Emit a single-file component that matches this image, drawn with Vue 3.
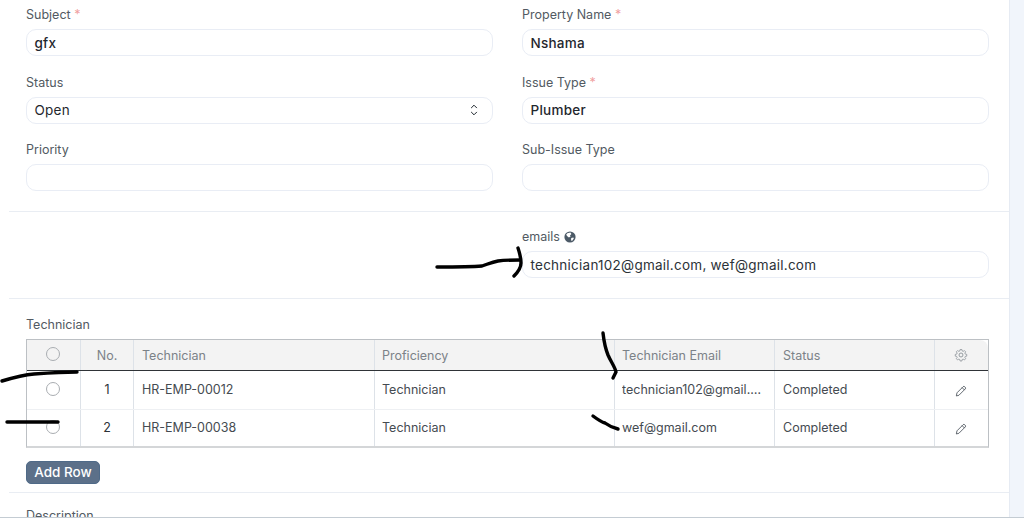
<script setup>
const topFields = [
  { label: 'Subject', required: true, value: 'gfx', bold: true },
  { label: 'Property Name', required: true, value: 'Nshama', bold: true },
  { label: 'Status', value: 'Open', select: true },
  { label: 'Issue Type', required: true, value: 'Plumber', bold: true },
  { label: 'Priority', value: '' },
  { label: 'Sub-Issue Type', value: '' },
]
const rows = [
  { no: 1, tech: 'HR-EMP-00012', prof: 'Technician', email: 'technician102@gmail.com', status: 'Completed' },
  { no: 2, tech: 'HR-EMP-00038', prof: 'Technician', email: 'wef@gmail.com', status: 'Completed' },
]
</script>

<template>
  <div class="page">
    <main class="card">
      <section class="grid top">
        <div v-for="f in topFields" :key="f.label" class="field">
          <div class="label">{{ f.label }}<span v-if="f.required" class="req"> *</span></div>
          <div class="input" :class="{ bold: f.bold }">
            <span>{{ f.value }}</span>
            <svg v-if="f.select" class="updown" width="8" height="12" viewBox="0 0 8 12" fill="none" stroke="#1f272e" stroke-width="1" stroke-linecap="round" stroke-linejoin="round">
              <path d="M1.4 3.8 4 1.2 6.6 3.8" />
              <path d="M1.4 8.2 4 10.8 6.6 8.2" />
            </svg>
          </div>
        </div>
      </section>

      <section class="grid emails">
        <div></div>
        <div class="field">
          <div class="label">emails
            <svg class="globe" width="12" height="12" viewBox="0 0 12 12">
              <circle cx="6" cy="6" r="5.6" fill="#4c5a67" />
              <path d="M3.4 2.2 6.4 1.6 7.4 3 6 4.4 6.6 5.6 4.9 6.4 3 5 2.2 3.6Z" fill="#fff" />
              <path d="M7.2 7 9.4 6.4 9.8 7.6 8.2 9.8 7 9.6Z" fill="#fff" />
            </svg>
          </div>
          <div class="input email-input"><span>technician102@gmail.com, wef@gmail.com</span></div>
        </div>
      </section>

      <section class="tech">
        <div class="label">Technician</div>
        <div class="table">
          <div class="tr head">
            <div class="td c-check"><span class="radio"></span></div>
            <div class="td c-no">No.</div>
            <div class="td c-a">Technician</div>
            <div class="td c-a tight">Proficiency</div>
            <div class="td c-b tight">Technician Email</div>
            <div class="td c-b">Status</div>
            <div class="td c-act">
              <svg width="14" height="14" viewBox="0 0 24 24" fill="none" stroke="#8d949a" stroke-width="1.6" stroke-linejoin="round">
                <circle cx="12" cy="12" r="3.4" />
                <path d="M10.3 2.5h3.4l.6 2.9 1.9.8 2.5-1.6 2.4 2.4-1.6 2.5.8 1.9 2.9.6v3.4l-2.9.6-.8 1.9 1.6 2.5-2.4 2.4-2.5-1.6-1.9.8-.6 2.9h-3.4l-.6-2.9-1.9-.8-2.5 1.6-2.4-2.4 1.6-2.5-.8-1.9-2.9-.6v-3.4l2.9-.6.8-1.9-1.6-2.5 2.4-2.4 2.5 1.6 1.9-.8Z" transform="translate(12 12) scale(.88) translate(-12 -13.2)" />
              </svg>
            </div>
          </div>
          <div v-for="r in rows" :key="r.no" class="tr body">
            <div class="td c-check"><span class="radio"></span></div>
            <div class="td c-no num">{{ r.no }}</div>
            <div class="td c-a">{{ r.tech }}</div>
            <div class="td c-a tight">{{ r.prof }}</div>
            <div class="td c-b tight"><span class="ellip">{{ r.email }}</span></div>
            <div class="td c-b">{{ r.status }}</div>
            <div class="td c-act">
              <svg class="pencil" width="12" height="12" viewBox="0 0 12 12" fill="none" stroke="#525a62" stroke-width=".9" stroke-linejoin="round" stroke-linecap="round">
                <path d="M1.4 10.6 2 7.8 8 1.8a1.2 1.2 0 0 1 1.8 0l.4.4a1.2 1.2 0 0 1 0 1.8l-6 6Z" />
                <path d="M7.2 2.7 9.3 4.8" />
              </svg>
            </div>
          </div>
        </div>
        <button class="add" type="button">Add Row</button>
      </section>

      <section class="desc">
        <div class="label">Description</div>
      </section>
    </main>
    <aside class="gutter"></aside>

    <svg class="scribble" width="1024" height="518" viewBox="0 0 1024 518" fill="none" stroke="#000" stroke-width="3.4" stroke-linecap="round" stroke-linejoin="round">
      <path d="M437 267C450 267 470 267 482 266C488 264 492 262 498 261C505 260 512 260 520 260" />
      <path d="M518 248C520 254 521 258 521 263C521 268 518 272 514 276" />
      <path d="M2 381C12 378 22 375 34 374C48 373 64 372 77 372" />
      <path d="M7 422H58" />
      <path d="M603 333C604 342 606 350 608 355C611 362 615 367 616 372C615 374 614 376 613 378" />
      <path d="M593 416C597 419 601 422 605 423C609 426 614 428 618 429" />
    </svg>
  </div>
</template>

<style scoped>
.page {
  position: relative;
  display: flex;
  width: 1024px;
  height: 518px;
  overflow: hidden;
  background: #fff;
  font-family: Inter, "Liberation Sans", sans-serif;
  font-size: 13px;
  color: #1f272e;
  box-sizing: border-box;
  border-bottom: 1px solid #c4ccd3;
}
.card {
  flex: none;
  width: 1000px;
  margin-left: 9px;
  box-sizing: border-box;
  background: #fff;
}
.gutter {
  flex: 1;
  background: #f1f5fb;
  border-left: 1px solid #e6ebf3;
}
.grid {
  display: grid;
  grid-template-columns: 467px 467px;
  column-gap: 29px;
  padding: 0 19px 0 17px;
  border-bottom: 1px solid #e9edf3;
}
.top {
  row-gap: 17.5px;
  padding-top: 6px;
  padding-bottom: 20px;
}
.emails {
  padding-top: 16px;
  padding-bottom: 20px;
}
.field {
  display: flex;
  flex-direction: column;
}
.label {
  height: 17px;
  line-height: 17px;
  font-size: 12.5px;
  color: #525a62;
  margin-bottom: 6px;
}
.req {
  color: #f0a0a0;
}
.input {
  display: flex;
  align-items: center;
  justify-content: space-between;
  box-sizing: border-box;
  height: 27px;
  padding: 0 14px 0 7.5px;
  border: 1px solid #e9edf5;
  border-radius: 10px;
  background: #fff;
  font-size: 13.5px;
  letter-spacing: .25px;
}
.bold {
  font-weight: 500;
}
.email-input {
  color: #2c3238;
}
.updown {
  flex: none;
}
.globe {
  margin-left: 1px;
  vertical-align: -1.5px;
}
.tech {
  padding: 17px 19px 8px 17px;
  border-bottom: 1px solid #e9edf3;
}
.table {
  box-sizing: border-box;
  width: 963px;
  border: 1px solid #bcc0c4;
  border-bottom: 2px solid #d4d6d8;
  overflow: hidden;
}
.tr {
  display: grid;
  grid-template-columns: 53px 53px 241px 240px 160px 160px 1fr;
}
.head {
  height: 31px;
  box-sizing: border-box;
  background: #f3f3f3;
  border-bottom: 1px solid #2f3337;
  border-top-right-radius: 8px;
  color: #7c8288;
  font-size: 12.5px;
}
.body {
  height: 38px;
  box-sizing: border-box;
  color: #454b51;
  font-size: 12.5px;
}
.body + .body {
  border-top: 1px solid #eef0f3;
  height: 37px;
}
.td {
  display: flex;
  align-items: center;
  padding: 0 8px;
  min-width: 0;
  box-sizing: border-box;
  border-left: 1px solid #dde2e8;
}
.body .td {
  padding-bottom: 2px;
}
.td:first-child {
  border-left: 0;
  padding-left: 7px;
}
.tight {
  padding-left: 7px;
}
.c-check,
.c-no,
.c-act {
  justify-content: center;
}
.c-act {
  padding-right: 9px;
}
.pencil {
  transform: translateY(2px);
}
.num {
  color: #2c3238;
}
.radio {
  display: block;
  box-sizing: border-box;
  width: 14px;
  height: 14px;
  border: 1px solid #a9adb1;
  border-radius: 50%;
  background: #fff;
}
.head .radio {
  background: transparent;
  transform: translateY(-1px);
}
.ellip {
  display: block;
  overflow: hidden;
  white-space: nowrap;
  text-overflow: ellipsis;
}
.add {
  display: block;
  box-sizing: border-box;
  width: 74px;
  height: 23px;
  margin-top: 13px;
  padding: 0;
  border: 1px solid #4f6a88;
  border-radius: 5px;
  background: #5c7089;
  color: #fff;
  font-family: inherit;
  font-size: 13.5px;
  font-weight: 500;
  line-height: 21px;
}
.desc {
  padding: 14px 17px 0;
}
.scribble {
  position: absolute;
  left: 0;
  top: 0;
  pointer-events: none;
}
</style>
